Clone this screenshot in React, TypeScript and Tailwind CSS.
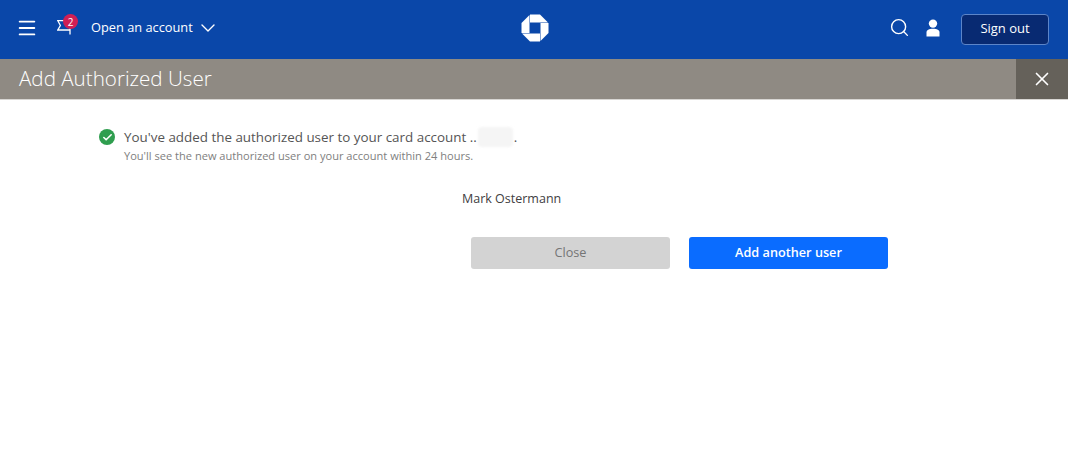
import { Check, ChevronDown, Menu, Search, X } from "lucide-react";

const logoPiece = "9,0.5 19,0.5 27,8.5 9,8.5";

function ChaseLogo() {
  return (
    <svg width="28" height="28" viewBox="0 0 28 28" fill="#fff" aria-label="Chase">
      {[0, 90, 180, 270].map((angle) => (
        <polygon key={angle} points={logoPiece} transform={`rotate(${angle} 14 14)`} />
      ))}
    </svg>
  );
}

function FlagIcon() {
  return (
    <svg width="14" height="15" viewBox="0 0 14 15" fill="none" stroke="#fff" strokeWidth="1.3">
      <path d="M13 0.7 H0.8 L3.4 5.5 L0.8 10 H13 M13 0.7 V14.5" />
    </svg>
  );
}

function UserIcon() {
  return (
    <svg width="14" height="18" viewBox="0 0 14 18" fill="#fff">
      <circle cx="7" cy="4.6" r="4.2" />
      <path d="M0.5 17.5 V13.5 C0.5 11 3 9.8 7 9.8 C11 9.8 13.5 11 13.5 13.5 V17.5 Z" />
    </svg>
  );
}

export default function App() {
  return (
    <div className="h-[450px] w-[1068px] overflow-hidden bg-white font-['Open_Sans',sans-serif]">
      <header className="grid h-[59px] grid-cols-[1fr_auto_1fr] items-center bg-[#0a47a9] pb-[4px] pl-[21px] pr-[19px] text-white">
        <div className="flex items-center">
          <Menu size={22} strokeWidth={2} className="-ml-[5px]" />
          <div className="relative ml-[19px]">
            <FlagIcon />
            <span className="absolute -right-[7px] -top-[6px] flex h-[15px] w-[15px] items-center justify-center rounded-full bg-[#d01f55] text-[10px] leading-none">
              2
            </span>
          </div>
          <span className="ml-[20px] whitespace-nowrap text-[12.8px] leading-none">Open an account</span>
          <ChevronDown size={24} strokeWidth={1.4} className="ml-[3px]" />
        </div>
        <ChaseLogo />
        <div className="flex items-center justify-end">
          <Search size={21} strokeWidth={1.6} />
          <div className="ml-[16px]">
            <UserIcon />
          </div>
          <button className="ml-[21px] mt-[3px] h-[31px] w-[88px] rounded-[4px] border border-[#5c85c9] bg-[#082a72] text-[13px] text-white">
            Sign out
          </button>
        </div>
      </header>

      <div className="flex h-[41px] items-center justify-between border-b border-[#d8d6d3] bg-[#8f8a83] pl-[19px]">
        <h1 className="pb-[2px] text-[20.6px] font-light text-white">Add Authorized User</h1>
        <div className="flex h-full w-[52px] items-center justify-center bg-[#65615a] text-white">
          <X size={22} strokeWidth={1.8} />
        </div>
      </div>

      <main className="pl-[99px] pt-[27px]">
        <div className="flex items-center gap-[9px]">
          <span className="flex h-4 w-4 items-center justify-center rounded-full bg-[#2f9e4f] text-white">
            <Check size={11} strokeWidth={3.5} />
          </span>
          <p className="flex items-center text-[13.4px] leading-5 text-[#555]">
            You've added the authorized user to your card account ..
            <span className="ml-[1px] mr-px h-5 w-[35px] rounded bg-[#f5f5f5] blur-[1px]" />.
          </p>
        </div>
        <p className="ml-[25px] mt-[1px] text-[11.07px] leading-4 text-[#808080]">
          You'll see the new authorized user on your account within 24 hours.
        </p>

        <p className="ml-[363px] mt-[26px] text-[12.5px] leading-[18px] text-[#414042]">Mark Ostermann</p>

        <div className="ml-[372px] mt-[29px] flex gap-[19px]">
          <button className="h-[32px] w-[199px] rounded-[3px] bg-[#d3d3d3] text-[12.7px] text-[#757575]">Close</button>
          <button className="h-[32px] w-[199px] rounded-[3px] bg-[#0a6cff] text-[12.7px] font-semibold text-white">
            Add another user
          </button>
        </div>
      </main>
    </div>
  );
}
